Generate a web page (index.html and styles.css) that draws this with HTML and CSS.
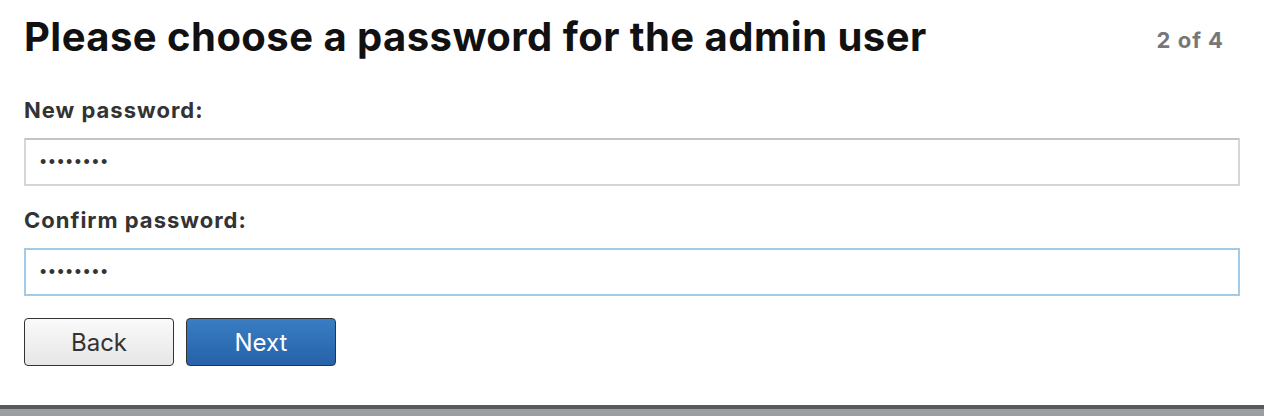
FILE: index.html
```html
<!DOCTYPE html>
<html>
<head>
<meta charset="utf-8">
<link rel="stylesheet" href="styles.css">
</head>
<body>
<div class="page">
  <div class="wizard">
    <header class="head">
      <h1 class="title">Please choose a password for the admin user</h1>
      <span class="step">2 of 4</span>
    </header>
    <label class="label" for="pw1">New password:</label>
    <input class="field" id="pw1" type="password" value="abcdefgh">
    <label class="label" for="pw2">Confirm password:</label>
    <input class="field field-focus" id="pw2" type="password" value="abcdefgh">
    <div class="actions">
      <button class="btn btn-back">Back</button>
      <button class="btn btn-next">Next</button>
    </div>
  </div>
  <div class="below"></div>
</div>
</body>
</html>
```
FILE: styles.css
```css
html, body {
  margin: 0;
  padding: 0;
  background: #fff;
}
.page {
  height: 416px;
  display: flex;
  flex-direction: column;
  overflow: hidden;
  font-family: Inter, "Open Sans", sans-serif;
}
.wizard {
  padding: 0 24px;
  height: 405px;
  display: flex;
  flex-direction: column;
}
.head {
  box-sizing: border-box;
  display: flex;
  align-items: flex-start;
  justify-content: space-between;
  height: 78px;
  padding-top: 13px;
}
.title {
  margin: 0;
  font-size: 40px;
  line-height: 48px;
  font-weight: 700;
  color: #111;
  letter-spacing: 0.45px;
}
.step {
  margin-top: 14px;
  font-size: 22px;
  line-height: 26px;
  font-weight: 700;
  color: #777;
  letter-spacing: 1px;
  margin-right: 16px;
}
.label {
  display: block;
  font-size: 22px;
  line-height: 26px;
  font-weight: 700;
  color: #333;
  letter-spacing: 1px;
  margin-top: 21px;
  margin-bottom: 15px;
}
.head + .label {
  margin-top: 19px;
}
.field {
  box-sizing: border-box;
  width: 1216px;
  height: 48px;
  margin: 0;
  border: 2px solid #d6d6d6;
  border-top-color: #c4c4c4;
  padding: 0 14px;
  font-size: 18px;
  color: #333;
  outline: none;
  letter-spacing: 2.4px;
}
.field-focus {
  border-color: #a3cbe8;
}
.actions {
  display: flex;
  gap: 12px;
  margin-top: 22px;
}
.btn {
  box-sizing: border-box;
  width: 150px;
  height: 48px;
  border: 1.5px solid #333;
  border-radius: 4px;
  font-family: Inter, "Open Sans", sans-serif;
  font-size: 24px;
  font-weight: 400;
}
.btn-back {
  background: linear-gradient(#fafafa, #e6e6e6);
  color: #333;
}
.btn-next {
  background: linear-gradient(#3a7dc2, #2562a9);
  color: #fff;
}
.below {
  flex: 1;
  border-top: 4px solid #5a5a5a;
  background: #9b9ea0;
}
```
